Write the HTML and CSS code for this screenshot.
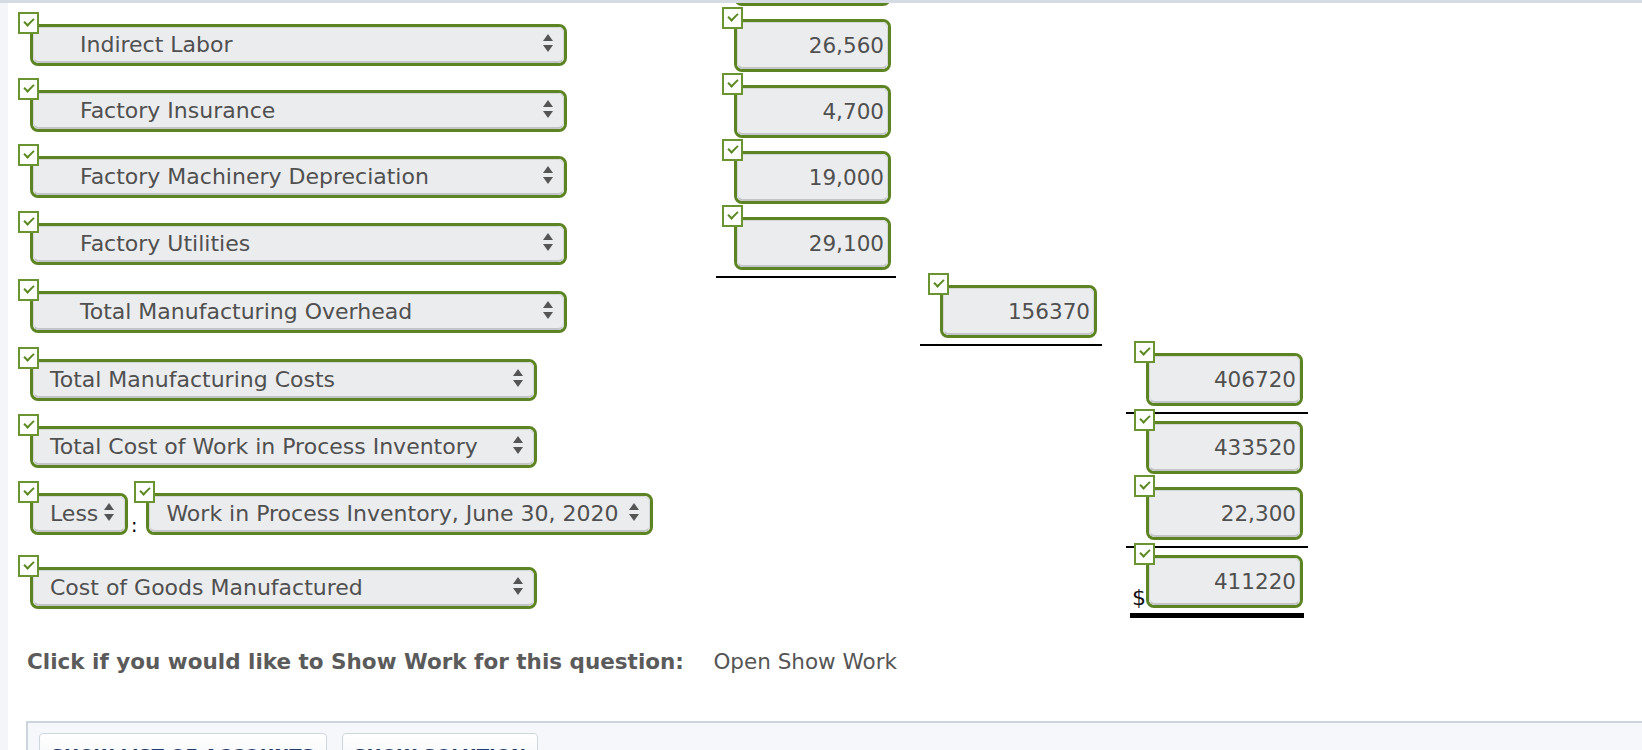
FILE: index.html
```html
<!DOCTYPE html>
<html lang="en">

<head>
    <meta charset="UTF-8">
    <meta name="viewport" content="width=device-width, initial-scale=1.0">
    <title>Schedule of Cost of Goods Manufactured</title>
    <link rel="stylesheet" href="styles.css">
</head>

<body>
    <div class="topbar"></div>
    <div class="page">
        <div class="sheet">
            <!-- row scrolled out of view, only its bottom edge shows -->
            <div class="row">
                <div class="label">
                    <div class="field">
                        <div class="dropdown wide"><div class="face indent"><span></span><i class="arrows"></i></div></div>
                    </div>
                </div>
                <div class="amt">
                    <div class="field"><div class="numbox"><div class="face"></div></div></div>
                </div>
                <div class="amt"></div>
                <div class="amt"></div>
            </div>

            <div class="row">
                <div class="label">
                    <div class="field">
                        <span class="check"></span>
                        <div class="dropdown wide"><div class="face indent"><span>Indirect Labor</span><i class="arrows"></i></div></div>
                    </div>
                </div>
                <div class="amt">
                    <div class="field"><span class="check"></span><div class="numbox"><div class="face">26,560</div></div></div>
                </div>
                <div class="amt"></div>
                <div class="amt"></div>
            </div>

            <div class="row">
                <div class="label">
                    <div class="field">
                        <span class="check"></span>
                        <div class="dropdown wide"><div class="face indent"><span>Factory Insurance</span><i class="arrows"></i></div></div>
                    </div>
                </div>
                <div class="amt">
                    <div class="field"><span class="check"></span><div class="numbox"><div class="face">4,700</div></div></div>
                </div>
                <div class="amt"></div>
                <div class="amt"></div>
            </div>

            <div class="row">
                <div class="label">
                    <div class="field">
                        <span class="check"></span>
                        <div class="dropdown wide"><div class="face indent"><span>Factory Machinery Depreciation</span><i class="arrows"></i></div></div>
                    </div>
                </div>
                <div class="amt">
                    <div class="field"><span class="check"></span><div class="numbox"><div class="face">19,000</div></div></div>
                </div>
                <div class="amt"></div>
                <div class="amt"></div>
            </div>

            <div class="row">
                <div class="label">
                    <div class="field">
                        <span class="check"></span>
                        <div class="dropdown wide"><div class="face indent"><span>Factory Utilities</span><i class="arrows"></i></div></div>
                    </div>
                </div>
                <div class="amt line">
                    <div class="field"><span class="check"></span><div class="numbox"><div class="face">29,100</div></div></div>
                </div>
                <div class="amt"></div>
                <div class="amt"></div>
            </div>

            <div class="row">
                <div class="label">
                    <div class="field">
                        <span class="check"></span>
                        <div class="dropdown wide"><div class="face indent"><span>Total Manufacturing Overhead</span><i class="arrows"></i></div></div>
                    </div>
                </div>
                <div class="amt"></div>
                <div class="amt line">
                    <div class="field"><span class="check"></span><div class="numbox"><div class="face">156370</div></div></div>
                </div>
                <div class="amt"></div>
            </div>

            <div class="row">
                <div class="label">
                    <div class="field">
                        <span class="check"></span>
                        <div class="dropdown"><div class="face"><span>Total Manufacturing Costs</span><i class="arrows"></i></div></div>
                    </div>
                </div>
                <div class="amt"></div>
                <div class="amt"></div>
                <div class="amt line">
                    <div class="field"><span class="check"></span><div class="numbox"><div class="face">406720</div></div></div>
                </div>
            </div>

            <div class="row">
                <div class="label">
                    <div class="field">
                        <span class="check"></span>
                        <div class="dropdown"><div class="face"><span>Total Cost of Work in Process Inventory</span><i class="arrows"></i></div></div>
                    </div>
                </div>
                <div class="amt"></div>
                <div class="amt"></div>
                <div class="amt">
                    <div class="field"><span class="check"></span><div class="numbox"><div class="face">433520</div></div></div>
                </div>
            </div>

            <div class="row">
                <div class="label">
                    <div class="pair">
                        <div class="field">
                            <span class="check"></span>
                            <div class="dropdown short"><div class="face"><span>Less</span><i class="arrows"></i></div></div>
                        </div>
                        <span class="colon">:</span>
                        <div class="field">
                            <span class="check"></span>
                            <div class="dropdown"><div class="face"><span>Work in Process Inventory, June 30, 2020</span><i class="arrows"></i></div></div>
                        </div>
                    </div>
                </div>
                <div class="amt"></div>
                <div class="amt"></div>
                <div class="amt line">
                    <div class="field"><span class="check"></span><div class="numbox"><div class="face">22,300</div></div></div>
                </div>
            </div>

            <div class="row last">
                <div class="label">
                    <div class="field">
                        <span class="check"></span>
                        <div class="dropdown"><div class="face"><span>Cost of Goods Manufactured</span><i class="arrows"></i></div></div>
                    </div>
                </div>
                <div class="amt"></div>
                <div class="amt"></div>
                <div class="amt total">
                    <span class="dollar">$</span>
                    <div class="field"><span class="check"></span><div class="numbox"><div class="face">411220</div></div></div>
                </div>
            </div>
        </div>

        <p class="showwork">Click if you would like to Show Work for this question: <a href="#" class="open">Open Show Work</a></p>

        <div class="tools">
            <button class="btn">SHOW LIST OF ACCOUNTS</button>
            <button class="btn">SHOW SOLUTION</button>
        </div>
    </div>
</body>

</html>
```

FILE: styles.css
```css
* {
	margin: 0;
	padding: 0;
	box-sizing: border-box;
}
html,
body {
	overflow: hidden;
}
body {
	background: #f3f5f8;
	font-family: "DejaVu Sans", Verdana, sans-serif;
	font-size: 21.5px;
	color: #505050;
}
.topbar {
	height: 3px;
	background: #d5dbe3;
}
.page {
	margin-left: 8px;
	height: 747px;
	background: #fff;
	overflow: hidden;
}

/* the worksheet, scrolled a little */
.sheet {
	margin-top: -57px;
}
.row {
	display: grid;
	grid-template-columns: 684px 180px 182px 182px;
	column-gap: 24px;
}
.label {
	display: flex;
	align-items: center;
	padding-left: 22px;
}
.row.last .label {
	align-items: flex-end;
	padding-bottom: 9px;
}
.amt {
	display: flex;
	justify-content: flex-end;
	align-items: flex-start;
	padding: 7px 5px 6px 0;
}
.amt.line {
	border-bottom: 2px solid #000;
}
.amt.total {
	border-bottom: 5px solid #000;
	padding-bottom: 5px;
	margin: 0 4px;
	padding-right: 1px;
}
.dollar {
	align-self: flex-end;
	font-size: 22px;
	color: #111;
	line-height: 0.85;
}

.field {
	position: relative;
}
.check {
	position: absolute;
	left: -12px;
	top: -12px;
	z-index: 2;
	width: 21px;
	height: 22px;
	background: #fff;
	border: 2px solid #6a9332;
}
.check::after {
	content: '';
	position: absolute;
	left: 4px;
	top: 4px;
	width: 8px;
	height: 4px;
	border-left: 2px solid #5c8a22;
	border-bottom: 2px solid #5c8a22;
	transform: rotate(-45deg);
}

.dropdown {
	width: 507px;
	height: 42px;
	border: 3px solid #5c8423;
	border-radius: 8px;
	background: #fff;
	font-size: 22px;
}
.dropdown.wide {
	width: 537px;
}
.dropdown.short {
	width: 98px;
}
.dropdown .face,
.numbox .face {
	height: 100%;
	background: #ebecee;
	border: 1px solid #d3d5d9;
	border-bottom: 2px solid #c2c4c8;
	border-radius: 6px;
}
.dropdown .face {
	display: flex;
	align-items: center;
	justify-content: space-between;
	padding: 0 10px 0 16px;
	white-space: nowrap;
}
.dropdown .face.indent {
	padding-left: 46px;
}
.arrows {
	display: flex;
	flex-direction: column;
	align-items: center;
	gap: 4px;
	margin-left: 6px;
	margin-top: -3px;
}
.arrows::before,
.arrows::after {
	content: '';
	border-left: 5px solid transparent;
	border-right: 5px solid transparent;
}
.arrows::before {
	border-bottom: 7px solid #555;
}
.arrows::after {
	border-top: 7px solid #555;
}

.pair {
	display: flex;
	align-items: flex-end;
}
.colon {
	font-size: 19px;
	line-height: 1;
	margin: 0 9px 0 3px;
	color: #000;
}

.numbox {
	width: 157px;
	height: 53px;
	border: 3px solid #5c8423;
	border-radius: 8px;
	background: #fff;
}
.numbox .face {
	text-align: right;
	line-height: 46px;
	padding-right: 3px;
}

.showwork {
	margin: 31px 0 0 19px;
	line-height: 26px;
	font-weight: bold;
	color: #5b5b5b;
}
.showwork .open {
	margin-left: 22px;
	font-weight: normal;
	color: #555;
	text-decoration: none;
}

.tools {
	display: flex;
	gap: 15px;
	margin: 46px 0 0 18px;
	padding: 10px 11px;
	background: #f5f7fa;
	border: 2px solid #ccd4de;
	border-right: none;
	height: 80px;
}
.btn {
	height: 44px;
	padding: 0 11px;
	font-family: "DejaVu Sans", Verdana, sans-serif;
	font-size: 18px;
	font-weight: bold;
	color: #1f3d6e;
	background: linear-gradient(#fff, #f0f2f5);
	border: 1px solid #cfd6df;
	border-radius: 4px;
	line-height: 44px;
	align-self: flex-start;
}
```
